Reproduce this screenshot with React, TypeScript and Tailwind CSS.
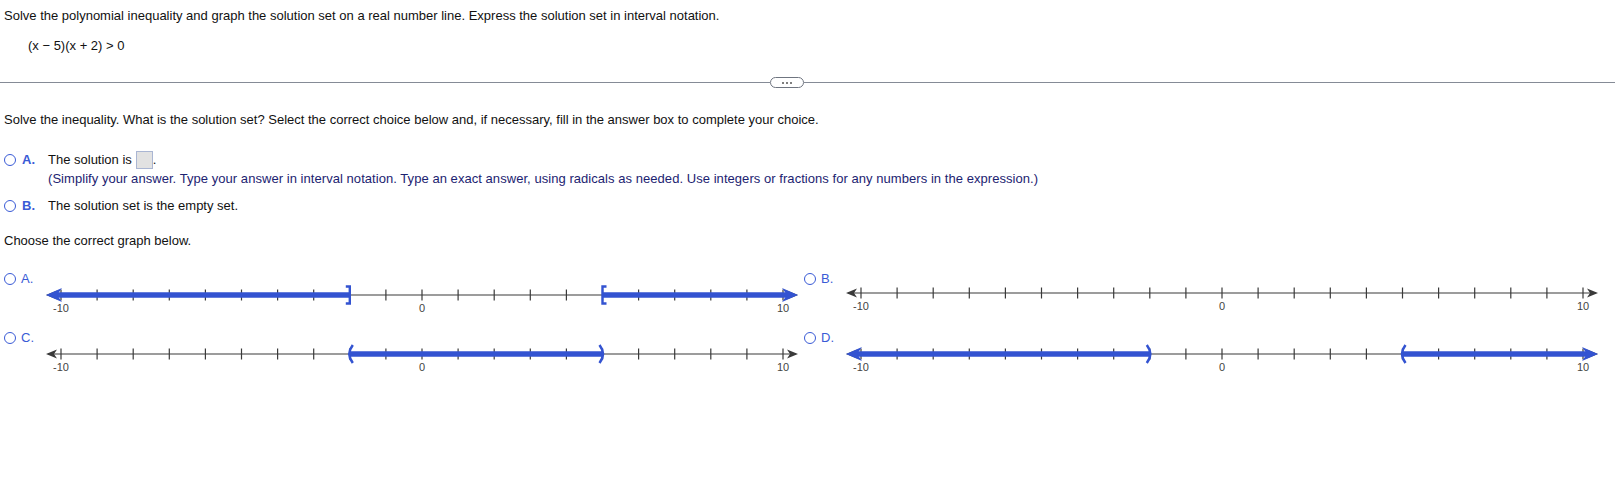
import React from "react";

const BLUE = "#3353d1";
const AX = "#3a3a3a";

type Seg = {
  from: number | "L";
  to: number | "R";
  fromEnd?: "[" | "(" | "arrow";
  toEnd?: "]" | ")" | "arrow";
};

function NumberLine({ segs, lineY }: { segs: Seg[]; lineY: number }) {
  const x0 = 21;
  const step = 36.1;
  const xOf = (v: number) => x0 + (v + 10) * step;
  const leftTip = 6;
  const rightTip = 758;
  const ticks = Array.from({ length: 21 }, (_, i) => i - 10);
  const y = lineY;
  return (
    <svg width="770" height="50" className="block">
      <line x1={leftTip + 2} y1={y} x2={rightTip - 2} y2={y} stroke={AX} strokeWidth={1.2} />
      <path d={`M${leftTip} ${y} L${leftTip + 11} ${y - 4.5} L${leftTip + 8} ${y} L${leftTip + 11} ${y + 4.5} Z`} fill={AX} />
      <path d={`M${rightTip} ${y} L${rightTip - 11} ${y - 4.5} L${rightTip - 8} ${y} L${rightTip - 11} ${y + 4.5} Z`} fill={AX} />
      {ticks.map((t) => (
        <line key={t} x1={xOf(t)} y1={y - 5.5} x2={xOf(t)} y2={y + 5.5} stroke={AX} strokeWidth={1.2} />
      ))}
      {segs.map((s, i) => {
        const a = s.from === "L" ? leftTip + 8 : xOf(s.from);
        const b = s.to === "R" ? rightTip - 8 : xOf(s.to);
        return (
          <g key={i}>
            <line x1={a} y1={y} x2={b} y2={y} stroke={BLUE} strokeWidth={5.5} />
            {s.fromEnd === "arrow" && (
              <path d={`M${leftTip} ${y} L${leftTip + 16} ${y - 7} L${leftTip + 11} ${y} L${leftTip + 16} ${y + 7} Z`} fill={BLUE} />
            )}
            {s.toEnd === "arrow" && (
              <path d={`M${rightTip} ${y} L${rightTip - 16} ${y - 7} L${rightTip - 11} ${y} L${rightTip - 16} ${y + 7} Z`} fill={BLUE} />
            )}
            {s.toEnd === "]" && (
              <path d={`M${b - 4} ${y - 8.5} L${b} ${y - 8.5} L${b} ${y + 8.5} L${b - 4} ${y + 8.5}`} fill="none" stroke={BLUE} strokeWidth={2.4} />
            )}
            {s.fromEnd === "[" && (
              <path d={`M${a + 4} ${y - 8.5} L${a} ${y - 8.5} L${a} ${y + 8.5} L${a + 4} ${y + 8.5}`} fill="none" stroke={BLUE} strokeWidth={2.4} />
            )}
            {s.toEnd === ")" && (
              <path d={`M${b - 3} ${y - 9} Q${b + 4} ${y} ${b - 3} ${y + 9}`} fill="none" stroke={BLUE} strokeWidth={2.6} />
            )}
            {s.fromEnd === "(" && (
              <path d={`M${a + 3} ${y - 9} Q${a - 4} ${y} ${a + 3} ${y + 9}`} fill="none" stroke={BLUE} strokeWidth={2.6} />
            )}
          </g>
        );
      })}
      {[-10, 0, 10].map((t) => (
        <text
          key={t}
          x={xOf(t)}
          y={y + 17}
          textAnchor="middle"
          fontFamily="'Liberation Sans', Arial, sans-serif"
          fontSize="11"
          fill="#444"
        >
          {t}
        </text>
      ))}
    </svg>
  );
}

function Radio() {
  return <span className="inline-block w-[12px] h-[12px] rounded-full border-[1.3px] border-[#3a5bd6] bg-white shrink-0" />;
}

function GraphCell({ letter, segs, lineY }: { letter: string; segs: Seg[]; lineY: number }) {
  return (
    <div className="flex items-start">
      <div className="w-[40px] flex items-center gap-[5px] pl-[4px] h-[16px]">
        <Radio />
        <span className="text-[#3a5bd6] text-[13px] leading-[16px]">{letter}.</span>
      </div>
      <NumberLine segs={segs} lineY={lineY} />
    </div>
  );
}

export default function App() {
  return (
    <div
      className="w-[1618px] h-[478px] bg-white text-[#111] text-[13px] leading-[16px] relative overflow-hidden"
      style={{ fontFamily: "'Liberation Sans', Arial, sans-serif" }}
    >
      <div className="pt-[8px] pl-[4px]">
        Solve the polynomial inequality and graph the solution set on a real number line. Express the solution set in interval notation.
      </div>
      <div className="pt-[14px] pl-[28px]">(x − 5)(x + 2) &gt; 0</div>

      <div className="mt-[23px] mr-[3px] flex items-center">
        <div className="h-px bg-[#858b96] w-[770px]" />
        <div className="w-[34px] h-[11px] rounded-full border border-[#6f7580] flex items-center justify-center gap-[2px] shrink-0">
          <span className="w-[2px] h-[2px] bg-[#555] rounded-full" />
          <span className="w-[2px] h-[2px] bg-[#555] rounded-full" />
          <span className="w-[2px] h-[2px] bg-[#555] rounded-full" />
        </div>
        <div className="h-px bg-[#858b96] flex-1" />
      </div>

      <div className="pt-[24px] pl-[4px]">
        Solve the inequality. What is the solution set? Select the correct choice below and, if necessary, fill in the answer box to complete your choice.
      </div>

      <div className="mt-[23px] flex items-start">
        <div className="w-[48px] flex items-center gap-[6px] pl-[4px] h-[18px]">
          <Radio />
          <span className="text-[#3a5bd6] font-bold text-[13px]">A.</span>
        </div>
        <div>
          <div className="flex items-center h-[18px]">
            <span>The solution is</span>
            <span className="inline-block ml-[4px] w-[17px] h-[18px] bg-[#e2e2e2] border border-[#aab6d3]" />
            <span>.</span>
          </div>
          <div className="text-[#1c2371] mt-[2px] tracking-[0.05px]">
            (Simplify your answer. Type your answer in interval notation. Type an exact answer, using radicals as needed. Use integers or fractions for any numbers in the expression.)
          </div>
        </div>
      </div>

      <div className="mt-[10px] flex items-center">
        <div className="w-[48px] flex items-center gap-[6px] pl-[4px] h-[18px]">
          <Radio />
          <span className="text-[#3a5bd6] font-bold text-[13px]">B.</span>
        </div>
        <span>The solution set is the empty set.</span>
      </div>

      <div className="mt-[18px] pl-[4px]">Choose the correct graph below.</div>

      <div className="mt-[22px] grid grid-cols-[800px_800px] gap-y-[9px]">
        <GraphCell
          letter="A"
          lineY={24}
          segs={[
            { from: "L", to: -2, fromEnd: "arrow", toEnd: "]" },
            { from: 5, to: "R", fromEnd: "[", toEnd: "arrow" },
          ]}
        />
        <GraphCell letter="B" lineY={22} segs={[]} />
        <GraphCell letter="C" lineY={24} segs={[{ from: -2, to: 5, fromEnd: "(", toEnd: ")" }]} />
        <GraphCell
          letter="D"
          lineY={24}
          segs={[
            { from: "L", to: -2, fromEnd: "arrow", toEnd: ")" },
            { from: 5, to: "R", fromEnd: "(", toEnd: "arrow" },
          ]}
        />
      </div>
    </div>
  );
}
